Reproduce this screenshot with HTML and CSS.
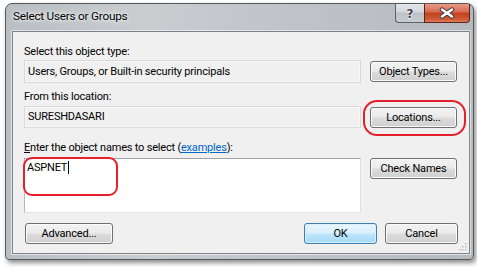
FILE: index.html
```html
<!DOCTYPE html>
<html>
<head>
<meta charset="utf-8">
<link rel="stylesheet" href="styles.css">
</head>
<body>
<div class="window">
  <div class="titlebar">
    <div class="title">Select Users or Groups</div>
    <div class="caps">
      <div class="cap help">?</div>
      <div class="cap close">
        <svg width="18" height="12" viewBox="0 0 18 12"><path d="M4 2.5 L14 9.5 M14 2.5 L4 9.5" stroke="#3a3a3a" stroke-width="4.4" stroke-linecap="round" fill="none"/><path d="M4 2.5 L14 9.5 M14 2.5 L4 9.5" stroke="#ffffff" stroke-width="2.6" stroke-linecap="round" fill="none"/></svg>
      </div>
    </div>
  </div>
  <div class="client">
    <div class="label l1">Select this object type:</div>
    <div class="row r1">
      <div class="field">Users, Groups, or Built-in security principals</div>
      <div class="btn b1">Object Types...</div>
    </div>
    <div class="label l2">From this location:</div>
    <div class="row r2">
      <div class="field f2">SURESHDASARI</div>
      <div class="btn b2">Locations...</div>
    </div>
    <div class="label l3"><u>E</u>nter the object names to select (<a class="link">examples</a>):</div>
    <div class="row r3">
      <div class="textarea">ASPNET<span class="caret"></span></div>
      <div class="btn b3">Check Names</div>
    </div>
    <div class="footer">
      <div class="btn adv">Advanced...</div>
      <div class="btn ok">OK</div>
      <div class="btn cancel">Cancel</div>
    </div>
    <svg class="grip" width="8" height="8" viewBox="0 0 8 8">
      <rect x="6" y="0" width="1.5" height="1.5" fill="#b9b9b9"/>
      <rect x="3" y="3" width="1.5" height="1.5" fill="#b9b9b9"/>
      <rect x="6" y="3" width="1.5" height="1.5" fill="#b9b9b9"/>
      <rect x="0" y="6" width="1.5" height="1.5" fill="#b9b9b9"/>
      <rect x="3" y="6" width="1.5" height="1.5" fill="#b9b9b9"/>
      <rect x="6" y="6" width="1.5" height="1.5" fill="#b9b9b9"/>
    </svg>
  </div>
</div>
<div class="mark mark-loc"></div>
<div class="mark mark-asp"></div>
</body>
</html>
```
FILE: styles.css
```css
html, body {
  margin: 0;
  padding: 0;
  background: #ffffff;
  overflow: hidden;
}
body {
  width: 477px;
  height: 267px;
  position: relative;
  font-family: Roboto, "Liberation Sans", Arial, sans-serif;
  font-size: 11px;
  letter-spacing: -0.2px;
  color: #000;
}
.window {
  box-sizing: border-box;
  margin: 3px 0 0 5px;
  width: 469px;
  height: 257px;
  border: 1px solid #51575d;
  border-radius: 7px 7px 4px 4px;
  background: linear-gradient(to right, #b9bec2 0%, #c9cdd0 30%, #c0c4c8 60%, #b5babe 100%);
  padding: 0 3px 5px 6px;
  display: flex;
  flex-direction: column;
  box-shadow: 2px 3px 5px rgba(0,0,0,0.45);
}
.titlebar {
  height: 27px;
  display: flex;
  align-items: flex-start;
  flex-shrink: 0;
}
.title {
  padding: 5px 0 0 1px;
  font-size: 11.8px;
  letter-spacing: -0.25px;
  line-height: 15px;
  color: #000;
  text-shadow: 0 0 6px #ffffff, 0 0 3px #ffffff;
}
.caps {
  margin-left: auto;
  display: flex;
}
.cap {
  box-sizing: border-box;
  height: 19px;
  border: 1px solid #5b6066;
  border-top: none;
  display: flex;
  align-items: center;
  justify-content: center;
}
.help {
  width: 29px;
  border-radius: 0 0 0 4px;
  border-right: none;
  background: linear-gradient(to bottom, #e4e7ea 0%, #d3d7db 45%, #bcc1c6 50%, #c7ccd1 100%);
  font-family: "DejaVu Sans", sans-serif;
  font-weight: bold;
  font-size: 12px;
  letter-spacing: 0;
  color: #3d444c;
  text-shadow: 0 1px 0 #fff, 0 0 2px #fff;
  padding-top: 1px;
}
.close {
  width: 46px;
  border-radius: 0 0 4px 0;
  border-color: #5e2218;
  background: linear-gradient(to bottom, #e69a86 0%, #d86a50 45%, #c3401f 50%, #cf5a37 85%, #dd8060 100%);
}
.client {
  position: relative;
  flex: 1;
  background: #f0f0f0;
  border: 1px solid #7c8288;
  box-shadow: 0 0 0 1px rgba(255,255,255,0.55);
  padding: 13px 11px 0 11px;
}
.label {
  line-height: 13px;
  height: 13px;
  white-space: nowrap;
}
.l2 { margin-top: 7px; }
.l3 { margin-top: 13px; }
.row {
  display: flex;
  align-items: flex-start;
  gap: 9px;
}
.r1 { margin-top: 2px; }
.r2 { margin-top: 3px; }
.r3 { margin-top: 4px; }
.field {
  box-sizing: border-box;
  width: 337px;
  height: 23px;
  border: 1px solid #d9d9d9;
  box-shadow: inset 0 0 0 1px #f7f7f7;
  background: #f0f0f0;
  padding: 0 0 1px 3px;
  display: flex;
  align-items: center;
  line-height: 13px;
  white-space: nowrap;
}
.f2 { height: 22px; }
.textarea {
  box-sizing: border-box;
  width: 337px;
  height: 55px;
  background: #ffffff;
  border: 1px solid #b5b8bd;
  border-top-color: #9fa3a8;
  border-bottom-color: #e1e5ea;
  border-right-color: #dde2e7;
  padding: 2px 0 0 2px;
  line-height: 13px;
}
.caret {
  display: inline-block;
  width: 1px;
  height: 13px;
  background: #000;
  vertical-align: top;
  margin-left: 1px;
}
.btn {
  box-sizing: border-box;
  width: 87px;
  height: 21px;
  border: 1px solid #707070;
  border-radius: 3px;
  background: linear-gradient(to bottom, #f2f2f2 0%, #ebebeb 48%, #dcdcdc 52%, #cfcfcf 100%);
  box-shadow: inset 0 0 0 1px #fbfbfb;
  display: flex;
  align-items: center;
  justify-content: center;
  line-height: 13px;
  color: #000;
  white-space: nowrap;
}
.b1 { margin-top: 1px; }
.b2 { margin-top: 1px; }
.footer {
  display: flex;
  align-items: center;
  margin-top: 10px;
}
.adv {
  width: 88px;
  margin-left: 1px;
}
.ok {
  width: 73px;
  margin-left: auto;
  border-color: #3c7fb1;
  background: linear-gradient(to bottom, #eaf6fd 0%, #d9f0fc 48%, #bee6fd 52%, #a7d9f5 100%);
  box-shadow: inset 0 0 0 1px #d8f1fd;
}
.cancel {
  width: 73px;
  margin-left: 8px;
}
.link {
  color: #0066cc;
  text-decoration: underline;
}
.grip {
  position: absolute;
  right: 2px;
  bottom: 2px;
}
.mark {
  position: absolute;
  border: 2px solid #e5202b;
  box-sizing: border-box;
}
.mark-loc {
  left: 363px;
  top: 100px;
  width: 103px;
  height: 36px;
  border-radius: 14px;
}
.mark-asp {
  left: 23px;
  top: 157px;
  width: 95px;
  height: 39px;
  border-radius: 9px;
}
```
